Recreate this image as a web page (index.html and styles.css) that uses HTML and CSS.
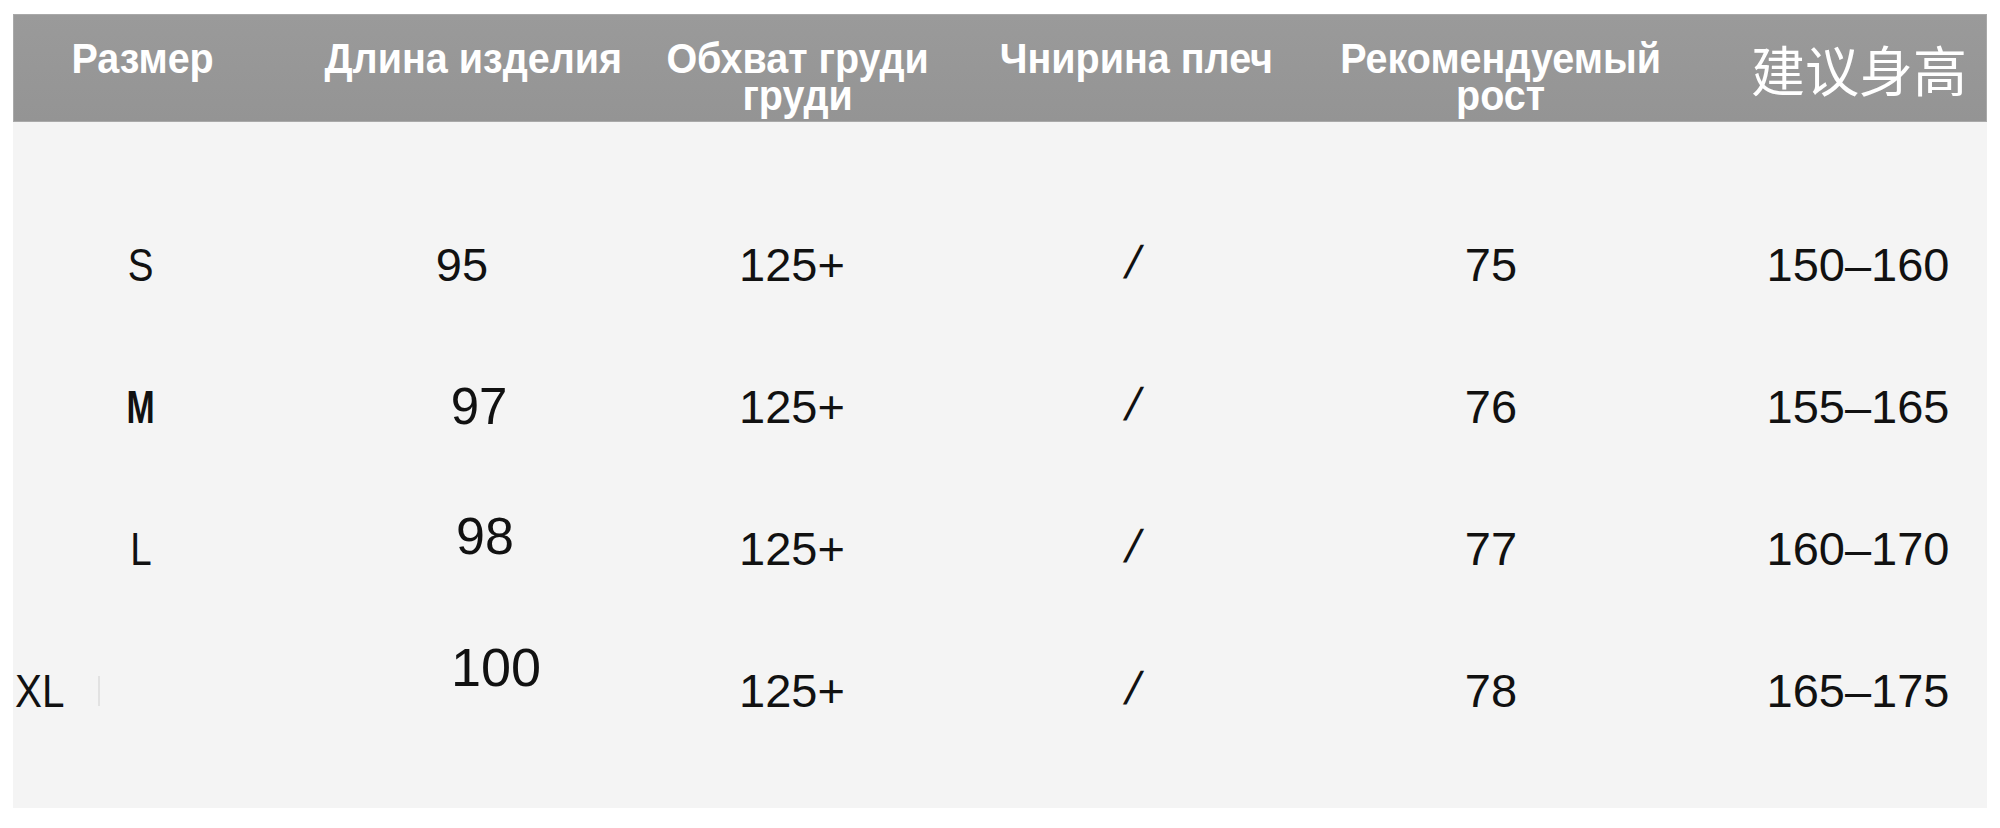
FILE: index.html
```html
<!DOCTYPE html>
<html lang="ru">
<head>
<meta charset="utf-8">
<title>Размерная сетка</title>
<link rel="stylesheet" href="styles.css">
</head>
<body>
<div class="chart">
  <div class="head">
    <div class="hcell c1"><span class="ht">Размер</span></div>
    <div class="hcell c2"><span class="ht">Длина изделия</span></div>
    <div class="hcell c3"><span class="ht">Обхват груди<br>груди</span></div>
    <div class="hcell c4"><span class="ht">Чнирина плеч</span></div>
    <div class="hcell c5"><span class="ht">Рекомендуемый<br>рост</span></div>
    <div class="hcell c6 zh">建议身高</div>
  </div>
  <div class="body">
    <div class="row">
      <div class="cell c1 size"><span class="narrow">S</span></div>
      <div class="cell c2 n95">95</div>
      <div class="cell c3 chest">125+</div>
      <div class="cell c4"><span class="slash">/</span></div>
      <div class="cell c5 rec">75</div>
      <div class="cell c6 hgt">150–160</div>
    </div>
    <div class="row">
      <div class="cell c1 size"><span class="narrow bold">M</span></div>
      <div class="cell c2 n97">97</div>
      <div class="cell c3 chest">125+</div>
      <div class="cell c4"><span class="slash">/</span></div>
      <div class="cell c5 rec">76</div>
      <div class="cell c6 hgt">155–165</div>
    </div>
    <div class="row">
      <div class="cell c1 size"><span class="narrow">L</span></div>
      <div class="cell c2 n98">98</div>
      <div class="cell c3 chest">125+</div>
      <div class="cell c4"><span class="slash">/</span></div>
      <div class="cell c5 rec">77</div>
      <div class="cell c6 hgt">160–170</div>
    </div>
    <div class="row">
      <div class="cell c1 xl"><span class="narrow left">XL</span><span class="tick"></span></div>
      <div class="cell c2 n100">100</div>
      <div class="cell c3 chest">125+</div>
      <div class="cell c4"><span class="slash">/</span></div>
      <div class="cell c5 rec">78</div>
      <div class="cell c6 hgt">165–175</div>
    </div>
  </div>
</div>
</body>
</html>
```

FILE: styles.css
```css
html, body {
  margin: 0;
  padding: 0;
  background: #ffffff;
}

.chart {
  width: 1974px;
  margin: 14px 0 0 13px;
  font-family: "Liberation Sans", Arial, sans-serif;
}

.head,
.row {
  display: grid;
  grid-template-columns: 260px 396px 256px 416px 318px 328px;
}

.head {
  height: 108px;
  box-sizing: border-box;
  background: linear-gradient(#9a9a9a, #949494);
  border: 1px solid #a9a9a9;
  color: #ffffff;
  align-items: start;
}

.hcell {
  display: flex;
  justify-content: center;
  text-align: center;
  font-weight: bold;
  font-size: 42px;
  line-height: 37px;
  padding-top: 25px;
  white-space: nowrap;
}

.ht {
  display: inline-block;
  transform: scaleX(0.94);
}

.hcell.c1 { padding-right: 2px; }
.hcell.c2 { padding-left: 2px; }
.hcell.c4 { padding-left: 4px; }

.hcell.c6 {
  padding-left: 70px;
}

.hcell.zh {
  font-family: "Noto Sans CJK SC", sans-serif;
  font-weight: normal;
  font-size: 54px;
  line-height: 60px;
  padding-top: 24px;
}

.body {
  background: #f4f4f4;
  padding: 72px 0 46px;
  color: #111111;
}

.row {
  height: 142px;
  align-items: center;
  justify-items: center;
}

.cell {
  font-size: 47px;
  line-height: 50px;
}

.cell.c6 {
  margin-left: 70px;
}

.narrow {
  display: inline-block;
  transform: scaleX(0.82);
}

.narrow.bold {
  font-weight: bold;
  transform: scaleX(0.72);
}

.narrow.left {
  transform-origin: left center;
  transform: scaleX(0.86);
}

.size {
  margin-left: -4px;
}

.xl {
  justify-self: start;
  margin-left: 2px;
  display: flex;
  align-items: center;
}

.tick {
  display: block;
  width: 2px;
  height: 30px;
  margin-left: 25px;
  background: #e2e2e2;
}

.slash {
  display: inline-block;
  font-size: 46px;
  transform: translateY(-3px) skewX(-14deg);
}

.n95 { margin-left: -18px; }
.n97 { margin-left: 16px; font-size: 51px; }
.n98 { margin-left: 28px; margin-bottom: 26px; font-size: 52px; }
.n100 { margin-left: 50px; margin-bottom: 48px; font-size: 54px; }

.chest { margin-left: -10px; }
.rec { margin-left: -18px; }
.hgt { margin-left: 102px; }
```
